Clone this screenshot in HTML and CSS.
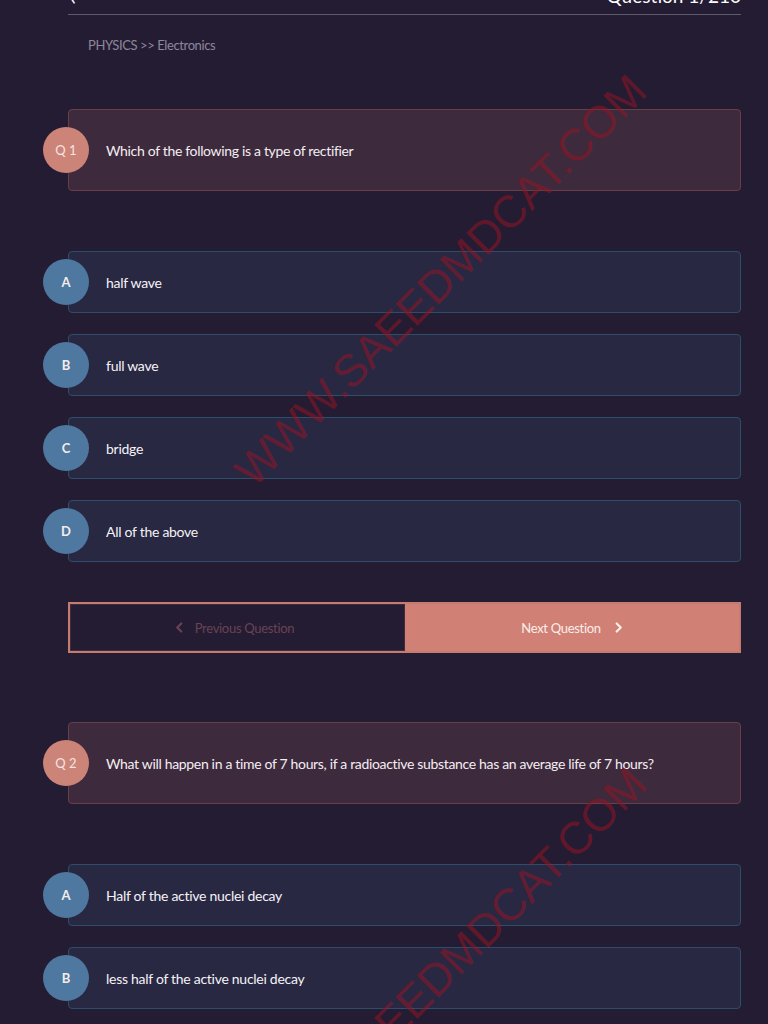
FILE: index.html
```html
<!DOCTYPE html>
<html lang="en">
<head>
<meta charset="utf-8">
<title>Quiz</title>
<link rel="stylesheet" href="styles.css">
</head>
<body>
<div class="page">
  <header class="topbar">
    <span class="back">‹</span>
    <span class="counter">Question 1/210</span>
  </header>
  <div class="crumb">PHYSICS &gt;&gt; Electronics</div>

  <section class="block">
    <div class="qcard"><span class="badge qbadge">Q 1</span><p class="qtext">Which of the following is a type of rectifier</p></div>
    <ul class="options">
      <li class="opt"><span class="badge obadge">A</span><span class="otext">half wave</span></li>
      <li class="opt"><span class="badge obadge">B</span><span class="otext">full wave</span></li>
      <li class="opt"><span class="badge obadge">C</span><span class="otext">bridge</span></li>
      <li class="opt"><span class="badge obadge">D</span><span class="otext">All of the above</span></li>
    </ul>
    <div class="nav">
      <button class="btn prev"><svg class="chev" viewBox="0 0 10 12" width="9" height="11"><path d="M7 1.5 L2.5 6 L7 10.5" /></svg>Previous Question</button>
      <button class="btn next">Next Question<svg class="chev" viewBox="0 0 10 12" width="9" height="11"><path d="M3 1.5 L7.5 6 L3 10.5" /></svg></button>
    </div>
  </section>

  <section class="block block2">
    <div class="qcard"><span class="badge qbadge">Q 2</span><p class="qtext">What will happen in a time of 7 hours, if a radioactive substance has an average life of 7 hours?</p></div>
    <ul class="options">
      <li class="opt"><span class="badge obadge">A</span><span class="otext">Half of the active nuclei decay</span></li>
      <li class="opt"><span class="badge obadge">B</span><span class="otext">less half of the active nuclei decay</span></li>
    </ul>
  </section>

  <div class="wm wm1">WWW.SAEEDMDCAT.COM</div>
  <div class="wm wm2">WWW.SAEEDMDCAT.COM</div>
</div>
</body>
</html>
```

FILE: styles.css
```css
html, body {
  margin: 0;
  padding: 0;
  background: #231c33;
  overflow: hidden;
}
body {
  font-family: Lato, "Open Sans", sans-serif;
  color: #f1eef4;
}
.page {
  position: relative;
  width: 768px;
  height: 1024px;
  padding: 0 27px 0 68px;
  box-sizing: border-box;
  overflow: hidden;
}
.topbar {
  height: 14px;
  display: flex;
  justify-content: space-between;
  align-items: flex-end;
  border-bottom: 1px solid #5f5a6c;
}
.back {
  font-size: 22px;
  line-height: 22px;
  margin-bottom: 6px;
  margin-left: 2px;
  color: #ffffff;
}
.counter {
  font-size: 19px;
  line-height: 19px;
  margin-bottom: 9px;
  color: #ffffff;
}
.crumb {
  margin: 22px 0 0 20px;
  font-size: 13px;
  letter-spacing: -0.4px;
  color: #8e889b;
  line-height: 16px;
}
.block {
  margin-top: 56px;
}
.block2 {
  margin-top: 69px;
}
.qcard {
  position: relative;
  height: 82px;
  box-sizing: border-box;
  background: #3e2a3d;
  border: 1px solid #6a3d47;
  border-radius: 4px;
  display: flex;
  align-items: center;
  padding-left: 37px;
}
.qtext {
  margin: 0;
  font-size: 14px;
  letter-spacing: -0.33px;
  color: #f3eef2;
}
.badge {
  position: absolute;
  left: -26px;
  top: 50%;
  width: 46px;
  height: 46px;
  margin-top: -23px;
  border-radius: 50%;
  display: flex;
  align-items: center;
  justify-content: center;
  font-size: 13px;
  font-weight: 700;
  color: #f4ecec;
}
.qbadge {
  background: #cc8378;
  font-weight: 400;
  color: #f6e4e0;
}
.obadge {
  background: #4e789f;
}
.options {
  list-style: none;
  margin: 60px 0 0;
  padding: 0;
  display: flex;
  flex-direction: column;
  gap: 21px;
}
.opt {
  position: relative;
  height: 62px;
  box-sizing: border-box;
  background: #292843;
  border: 1px solid #2d4e6b;
  border-radius: 4px;
  display: flex;
  align-items: center;
  padding-left: 37px;
}
.otext {
  font-size: 14px;
  letter-spacing: -0.28px;
  color: #f4f2f6;
}
.nav {
  margin-top: 40px;
  height: 51px;
  display: flex;
  box-sizing: border-box;
  border: 2px solid #c67b70;
  background: #d08075;
}
.btn {
  flex: 1;
  border: none;
  font-family: Lato, "Open Sans", sans-serif;
  font-size: 13px;
  letter-spacing: -0.3px;
  display: flex;
  align-items: center;
  justify-content: center;
  gap: 12px;
  padding: 0;
  cursor: pointer;
}
.prev {
  flex: 0 0 335px;
  background: #231c33;
  color: #6b4254;
  border: 1px solid #3f2d3f;
  gap: 11px;
  padding-right: 6px;
}
.next {
  background: #d08075;
  color: #fbeeea;
  gap: 13px;
}
.chev path {
  fill: none;
  stroke: currentColor;
  stroke-width: 2.4;
  stroke-linecap: round;
  stroke-linejoin: round;
}
.wm {
  position: absolute;
  left: 440px;
  width: 0;
  height: 0;
  pointer-events: none;
  font-family: "Liberation Sans", Arial, sans-serif;
  font-size: 45px;
  color: rgba(150, 20, 35, 0.55);
  white-space: nowrap;
  line-height: 1;
  display: flex;
  justify-content: center;
  align-items: center;
  transform: rotate(-45deg);
}
.wm1 {
  top: 280px;
}
.wm2 {
  top: 973px;
}
```
